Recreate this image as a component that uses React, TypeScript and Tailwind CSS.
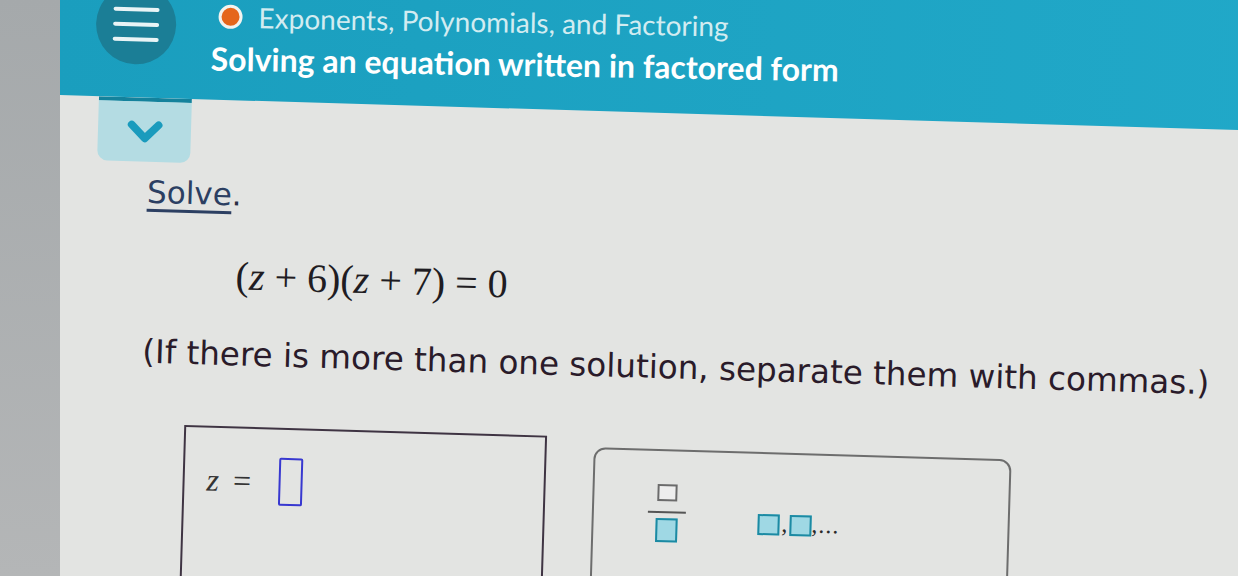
import { ChevronDown } from "lucide-react";

const sans = "font-['Lato','Open_Sans',sans-serif]";
const verdana = "font-['DejaVu_Sans','Verdana',sans-serif]";
const serif = "font-['Liberation_Serif','Times_New_Roman',serif]";

function MenuButton() {
  return (
    <div className="-mt-[18px] ml-[38px] flex h-[80px] w-[80px] shrink-0 flex-col items-center justify-center gap-[11px] rounded-full bg-[#1b7e96]">
      <span className="block h-[4px] w-[46px] rounded-full bg-[#e9f4f6]" />
      <span className="block h-[4px] w-[46px] rounded-full bg-[#e9f4f6]" />
      <span className="block h-[4px] w-[46px] rounded-full bg-[#e9f4f6]" />
    </div>
  );
}

function Header() {
  return (
    <div className="flex h-[135px] items-start bg-gradient-to-r from-[#1a9ebe] to-[#21a9c9] pt-[40px]">
      <MenuButton />
      <div className={`-mt-[2px] ml-[35px] flex origin-top-left -rotate-[0.7deg] flex-col ${sans}`}>
        <div className="flex items-center">
          <span className="ml-[7px] block h-[24px] w-[24px] rounded-full border-[3px] border-[#f3f3ef] bg-[#e5661b]" />
          <span className="ml-[16px] text-[28px] leading-[28px] text-[#d2ecf1]">
            Exponents, Polynomials, and Factoring
          </span>
        </div>
        <div className="mt-[8px] text-[32px] font-bold leading-[40px] text-white">
          Solving an equation written in factored form
        </div>
      </div>
    </div>
  );
}

function FractionKey() {
  return (
    <div className="flex flex-col items-center">
      <span className="block h-[17px] w-[20px] border-[2px] border-[#6b6b6b] bg-[#eeeeee]" />
      <span className="mt-[10px] block h-[2px] w-[38px] bg-[#555]" />
      <span className="mt-[5px] block h-[24px] w-[22px] border-[2px] border-[#1c8aa3] bg-[#9fd8e4]" />
    </div>
  );
}

function ListKey() {
  return (
    <div className={`flex items-end ${serif} text-[24px] leading-none text-[#2a2a2a]`}>
      <span className="block h-[21px] w-[22px] border-[2px] border-[#1c8aa3] bg-[#9fd8e4]" />
      <span className="px-[2px]">,</span>
      <span className="block h-[21px] w-[22px] border-[2px] border-[#1c8aa3] bg-[#9fd8e4]" />
      <span className="tracking-[1px]">,...</span>
    </div>
  );
}

export default function App() {
  return (
    <div className="flex h-[576px] w-[1238px] overflow-hidden bg-[#e3e4e2]">
      <div className="w-[60px] shrink-0 bg-gradient-to-b from-[#a5a9ab] to-[#b4b6b7]" />
      <div className="relative flex-1 overflow-hidden">
        <div className="-mt-[40px] w-[1320px] origin-top-left rotate-[1.7deg]">
          <Header />

          {/* collapse tab under the header */}
          <div className="ml-[43px] flex h-[64px] w-[93px] items-center justify-center rounded-b-[10px] border-t-[4px] border-[#14829c] bg-[#b4dce3]">
            <ChevronDown className="text-[#1a9bbd]" size={54} strokeWidth={3.4} />
          </div>

          <div className="pl-[94px] pt-[10px]">
            <div className={`${verdana} text-[31px] leading-[40px] text-[#2a2e44]`}>
              <span className="underline decoration-[3px] underline-offset-[6px] text-[#2c3f62]">Solve</span>.
            </div>

            <div className={`ml-[91px] mt-[36px] ${serif} text-[40px] leading-[52px] text-[#1f1c22]`}>
              (<i>z</i> + 6)(<i>z</i> + 7) = 0
            </div>

            <div className={`mt-[30px] ${verdana} text-[32.6px] leading-[44px] text-[#2a1b2a]`}>
              (If there is more than one solution, separate them with commas.)
            </div>

            <div className="mt-[50px] flex items-start">
              <div className="ml-[44px] h-[200px] w-[363px] border-[2px] border-[#3f3443] pl-[22px] pt-[28px]">
                <div className={`flex items-center ${serif} text-[32px] text-[#333]`}>
                  <i>z</i>
                  <span className="ml-[14px]">=</span>
                  <span className="ml-[27px] block h-[48px] w-[24px] rounded-[2px] border-[2px] border-[#3838d0]" />
                </div>
              </div>
              <div className="ml-[47px] mt-[10px] flex h-[200px] w-[418px] items-start gap-[72px] rounded-[12px] border-[2px] border-[#6d6d6d] pl-[54px] pt-[33px]">
                <FractionKey />
                <div className="mt-[24px]">
                  <ListKey />
                </div>
              </div>
            </div>
          </div>
        </div>
      </div>
    </div>
  );
}
